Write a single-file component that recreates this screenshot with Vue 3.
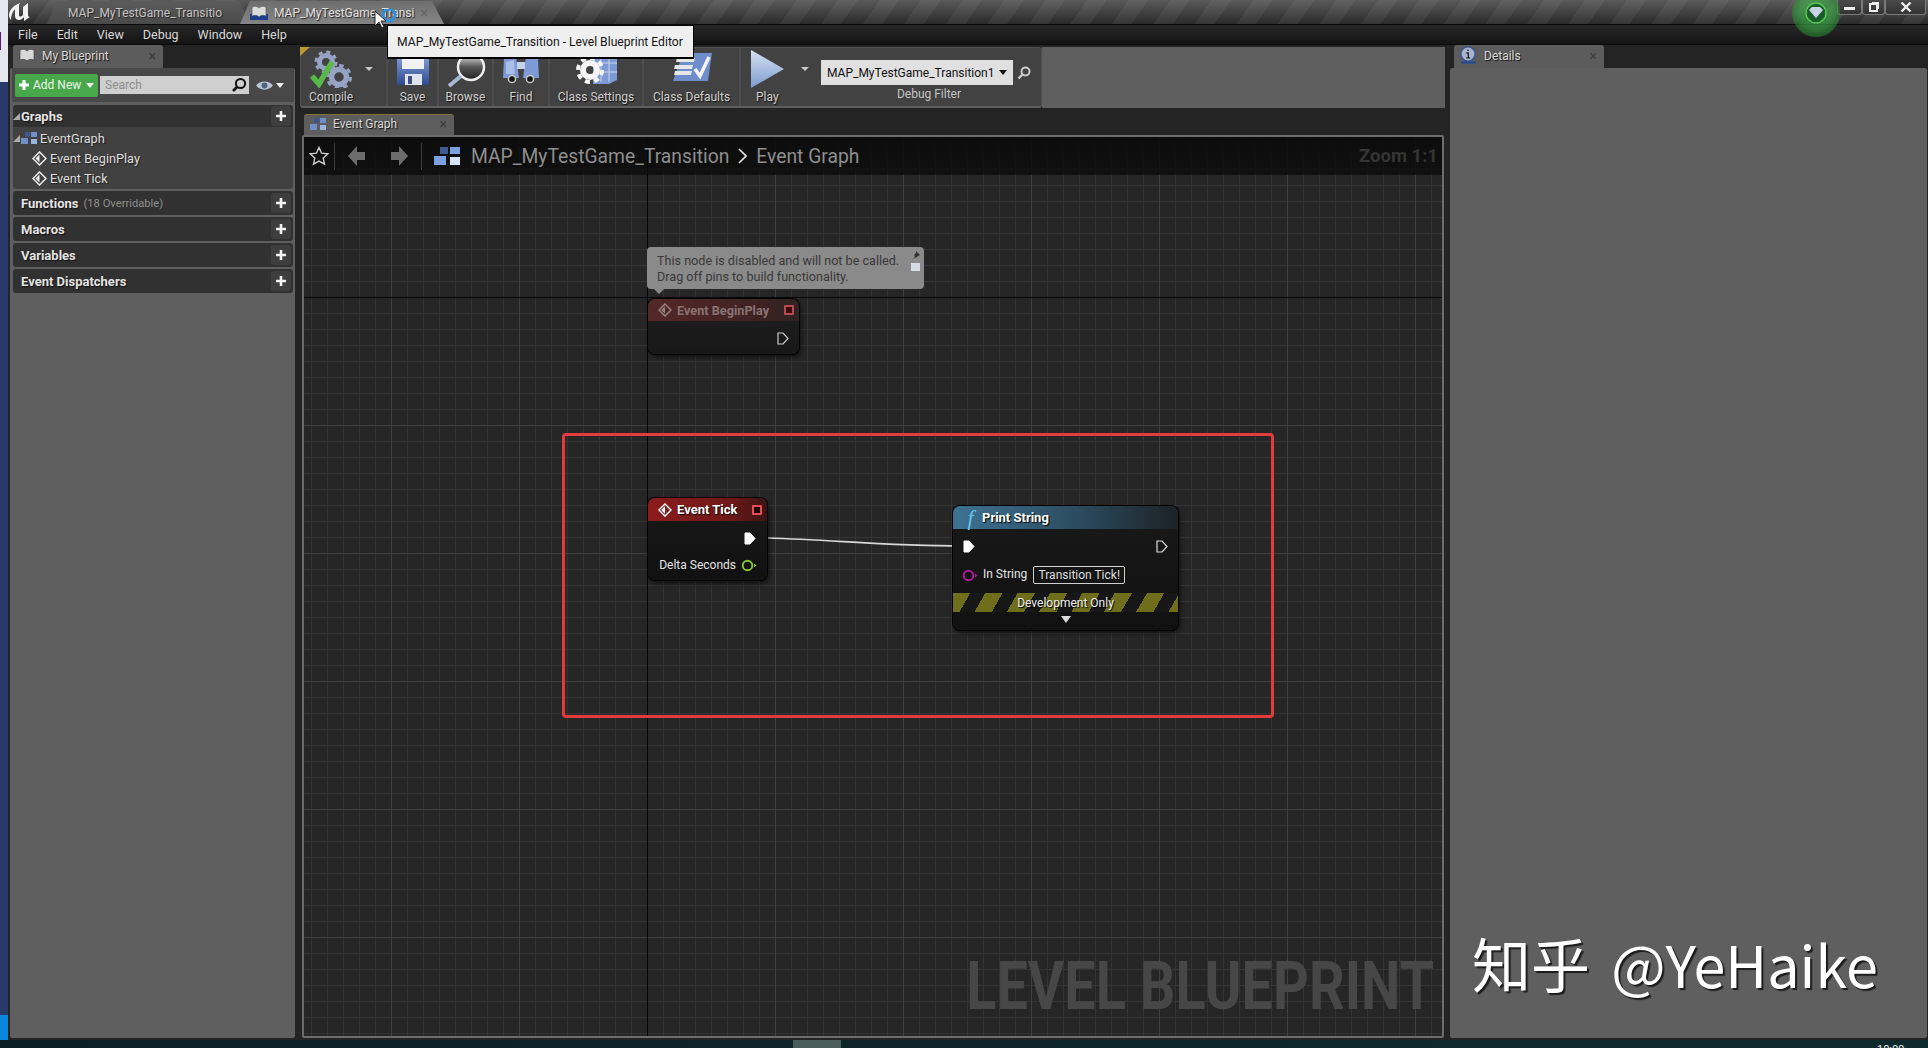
<script setup>
const menus = ['File', 'Edit', 'View', 'Debug', 'Window', 'Help']
const sections = [
  { name: 'Functions', note: '(18 Overridable)' },
  { name: 'Macros' },
  { name: 'Variables' },
  { name: 'Event Dispatchers' },
]
</script>

<template>
  <div class="root">
    <div class="main">
      <div class="strip">
        <div class="strip-light"><i class="strip-mark"></i></div>
        <div class="strip-navy"></div>
        <div class="strip-blue"></div>
      </div>

      <div class="window">
        <div class="titlebar">
          <svg class="logo" viewBox="0 0 24 20" width="24" height="20">
            <path d="M12 1C6 3 1 8 1 13c0 2 1 4 2 5 0-4 1-8 4-11v7c0 4 4 5 7 3l2-2v4l6-4c-2 0-2-1-2-3V1l-5 4v8c-2 2-4 2-4 0V3z" fill="#f2f2f2" />
          </svg>
          <div class="doc-tab doc-tab-off"><span class="doc-name">MAP_MyTestGame_Transitio</span></div>
          <div class="doc-tab doc-tab-on">
            <svg width="18" height="15" viewBox="0 0 18 15"><rect x="0" y="9" width="18" height="6" fill="#1d3f8c" /><path d="M2 2c3-1 5-1 7 1 2-2 4-2 7-1v9c-3-1-5-1-7 1-2-2-4-2-7-1z" fill="#dcdcdc" stroke="#555" stroke-width=".6" /></svg>
            <span class="doc-name">MAP_MyTestGame_Transi</span>
            <span class="x">×</span>
          </div>
          <div class="winbtns">
            <div class="winbtn wb-min"><i></i></div>
            <div class="winbtn wb-max"><i></i></div>
            <div class="winbtn wb-close">
              <svg width="12" height="12" viewBox="0 0 12 12"><path d="M1.5 1.5l9 9M10.5 1.5l-9 9" stroke="#eee" stroke-width="2.4" /></svg>
            </div>
          </div>
        </div>

        <div class="menubar">
          <span v-for="m in menus" :key="m" class="menu">{{ m }}</span>
        </div>

        <div class="body">
          <div class="col-left">
            <div class="panel-tab">
              <svg width="16" height="13" viewBox="0 0 16 13"><path d="M1 1c3-1 5-1 7 1 2-2 4-2 7-1v10c-3-1-5-1-7 1-2-2-4-2-7-1z" fill="#d8d8d8" stroke="#444" stroke-width=".7" /></svg>
              <span class="tab-text">My Blueprint</span>
              <span class="x">×</span>
            </div>
            <div class="panel panel-left">
              <div class="bpbar">
                <div class="addnew">
                  <svg width="12" height="12" viewBox="0 0 12 12"><path d="M6 1v10M1 6h10" stroke="#fff" stroke-width="3" /></svg>
                  <span>Add New</span>
                  <i class="tri tri-white"></i>
                </div>
                <div class="search">
                  <span>Search</span>
                  <svg width="16" height="16" viewBox="0 0 16 16"><circle cx="9.5" cy="6.5" r="4.6" fill="none" stroke="#111" stroke-width="2" /><path d="M6 10l-4 4" stroke="#111" stroke-width="2.6" /></svg>
                </div>
                <svg class="eye" width="19" height="11" viewBox="0 0 19 11"><path d="M1 5.5C5 0 14 0 18 5.5 14 11 5 11 1 5.5z" fill="#b9c4d8" /><circle cx="9.5" cy="5.5" r="3" fill="#52627f" /></svg>
                <i class="tri tri-white"></i>
              </div>

              <div class="sec-head sec-graphs">
                <i class="expander"></i>
                <b>Graphs</b>
                <span class="plus"><svg width="12" height="12" viewBox="0 0 12 12"><path d="M6 1v10M1 6h10" stroke="#f2f2f2" stroke-width="2.6" /></svg></span>
              </div>
              <div class="tree">
                <div class="tree-row">
                  <i class="expander"></i>
                  <svg width="16" height="12" viewBox="0 0 16 12"><rect x="0" y="6" width="7" height="6" fill="#6f8fc8" /><rect x="4" y="0" width="5" height="5" fill="#3e5788" /><rect x="10" y="0" width="6" height="5" fill="#6f8fc8" /><rect x="10" y="7" width="6" height="5" fill="#9ab4e0" /></svg>
                  <span>EventGraph</span>
                </div>
                <div class="tree-row tree-child">
                  <svg width="15" height="15" viewBox="0 0 15 15"><path d="M7.5 1l6.5 6.5L7.5 14 1 7.5z" fill="none" stroke="#eee" stroke-width="1.5" /><path d="M7.5 3.5v8L3.5 7.5z" fill="#eee" /></svg>
                  <span>Event BeginPlay</span>
                </div>
                <div class="tree-row tree-child">
                  <svg width="15" height="15" viewBox="0 0 15 15"><path d="M7.5 1l6.5 6.5L7.5 14 1 7.5z" fill="none" stroke="#eee" stroke-width="1.5" /><path d="M7.5 3.5v8L3.5 7.5z" fill="#eee" /></svg>
                  <span>Event Tick</span>
                </div>
              </div>
              <div v-for="s in sections" :key="s.name" class="sec-head sec-solo">
                <b>{{ s.name }}</b>
                <small v-if="s.note">{{ s.note }}</small>
                <span class="plus"><svg width="12" height="12" viewBox="0 0 12 12"><path d="M6 1v10M1 6h10" stroke="#f2f2f2" stroke-width="2.6" /></svg></span>
              </div>
            </div>
          </div>

          <div class="col-mid">
            <div class="topbar">
              <div class="tools">
                <i class="corner"></i>
                <div class="tool t-compile">
                  <svg width="76" height="38" viewBox="0 0 76 38">
                    <g fill="none" stroke="#97a3c4">
                      <circle cx="25" cy="12" r="6.5" stroke-width="5" />
                      <circle cx="25" cy="12" r="10" stroke-width="3" stroke-dasharray="4 3.85" />
                      <circle cx="38" cy="27" r="7.5" stroke-width="5.5" />
                      <circle cx="38" cy="27" r="11.5" stroke-width="3" stroke-dasharray="4.5 4.5" />
                    </g>
                    <path d="M11 26l7 8 13-22" fill="none" stroke="#58b848" stroke-width="5.5" />
                    <path d="M64 17h8l-4 4z" fill="#c8c8c8" />
                  </svg>
                  <span>Compile</span>
                </div>
                <div class="tool t-save">
                  <svg width="36" height="38" viewBox="0 0 36 38">
                    <defs><linearGradient id="fl" x1="0" y1="0" x2="0" y2="1"><stop offset="0" stop-color="#8aa5e0" /><stop offset="1" stop-color="#2e4a8f" /></linearGradient></defs>
                    <rect x="2" y="4" width="32" height="31" rx="2" fill="url(#fl)" />
                    <rect x="7" y="4" width="22" height="15" fill="#f2f2f2" />
                    <rect x="10" y="24" width="17" height="11" fill="#dfe4ee" />
                    <rect x="13" y="26" width="4" height="8" fill="#3b4e7e" />
                  </svg>
                  <span>Save</span>
                </div>
                <div class="tool t-browse">
                  <svg width="44" height="38" viewBox="0 0 44 38">
                    <defs><linearGradient id="gl" x1="0" y1="0" x2="0" y2="1"><stop offset="0" stop-color="#e8e8e8" /><stop offset=".5" stop-color="#555" /><stop offset="1" stop-color="#222" /></linearGradient></defs>
                    <circle cx="27" cy="17" r="13" fill="url(#gl)" stroke="#f0f0f0" stroke-width="2.5" />
                    <path d="M17 26L5 36" stroke="#aab8d8" stroke-width="4" />
                  </svg>
                  <span>Browse</span>
                </div>
                <div class="tool t-find">
                  <svg width="42" height="38" viewBox="0 0 42 38">
                    <path d="M4 8l12-2 3 22H3zM26 6l12 2 1 20H23z" fill="#7e9ad6" />
                    <path d="M6 12l8-2 1 14H6z" fill="#a9bfe8" />
                    <rect x="17" y="12" width="8" height="7" fill="#c6d2ea" />
                    <circle cx="12" cy="29" r="3.6" fill="#161616" stroke="#c9c9c9" stroke-width="1.5" />
                    <circle cx="30" cy="29" r="3.6" fill="#161616" stroke="#c9c9c9" stroke-width="1.5" />
                  </svg>
                  <span>Find</span>
                </div>
                <div class="tool t-settings">
                  <svg width="46" height="38" viewBox="0 0 46 38">
                    <path d="M20 4h24v26l-8 4H20z" fill="#7e9ad6" />
                    <path d="M28 4v28M36 4v28M20 13h24M20 22h24" stroke="#c6d2ea" stroke-width="1" />
                    <circle cx="17" cy="20" r="7" fill="none" stroke="#f6f6f6" stroke-width="6" />
                    <circle cx="17" cy="20" r="12" fill="none" stroke="#f6f6f6" stroke-width="4" stroke-dasharray="5 4.4" />
                  </svg>
                  <span>Class Settings</span>
                </div>
                <div class="tool t-defaults">
                  <svg width="42" height="38" viewBox="0 0 42 38">
                    <path d="M12 3h29l-4 28H2z" fill="#6f8ccb" />
                    <path d="M4 15h18l-1 4H3zM4 21h17l-1 4H3zM6 8h18l-1 4H5z" fill="#e6e6e6" />
                    <path d="M24 19l5 7 9-19" fill="none" stroke="#f4f4f4" stroke-width="3.5" />
                  </svg>
                  <span>Class Defaults</span>
                </div>
                <div class="tool t-play">
                  <svg width="76" height="38" viewBox="0 0 76 38">
                    <defs><linearGradient id="pl" x1="0" y1="0" x2="0" y2="1"><stop offset="0" stop-color="#d6e2f2" /><stop offset="1" stop-color="#7d9bcf" /></linearGradient></defs>
                    <path d="M10 0l33 19L10 38z" fill="url(#pl)" />
                    <path d="M60 17h8l-4 4z" fill="#c8c8c8" />
                  </svg>
                  <span>Play</span>
                </div>
                <div class="filter">
                  <div class="filter-row">
                    <div class="combo"><span>MAP_MyTestGame_Transition1</span><i class="tri tri-black"></i></div>
                    <svg width="14" height="14" viewBox="0 0 14 14"><circle cx="8.5" cy="5.5" r="4" fill="none" stroke="#ccc" stroke-width="2" /><path d="M5.5 8.5L1.5 12.5" stroke="#ccc" stroke-width="2.4" /></svg>
                  </div>
                  <span class="filter-label">Debug Filter</span>
                </div>
              </div>
              <div class="tools-rest"></div>
            </div>

            <div class="graph-tabs">
              <div class="graph-tab">
                <svg width="16" height="12" viewBox="0 0 16 12"><rect x="0" y="6" width="7" height="6" fill="#6f8fc8" /><rect x="4" y="0" width="5" height="5" fill="#3e5788" /><rect x="10" y="0" width="6" height="5" fill="#6f8fc8" /><rect x="10" y="7" width="6" height="5" fill="#9ab4e0" /></svg>
                <span class="tab-text">Event Graph</span>
                <span class="x">×</span>
              </div>
            </div>

            <div class="graph">
              <i class="axis axis-v"></i>
              <i class="axis axis-h"></i>

              <div class="graph-head">
                <div class="gh-cell gh-star">
                  <svg width="20" height="20" viewBox="0 0 20 20"><path d="M10 1.5l2.6 5.7 6.2.7-4.6 4.2 1.3 6.1L10 15.1l-5.5 3.1 1.3-6.1L1.2 7.9l6.2-.7z" fill="none" stroke="#cfcfcf" stroke-width="1.4" /></svg>
                </div>
                <i class="gh-div"></i>
                <div class="gh-cell gh-nav">
                  <svg width="18" height="20" viewBox="0 0 18 20"><path d="M9 0L0 10l9 10v-6h8V6H9z" fill="#6d6d6d" /></svg>
                  <svg width="18" height="20" viewBox="0 0 18 20"><path d="M9 0l9 10-9 10v-6H1V6h8z" fill="#6d6d6d" /></svg>
                </div>
                <i class="gh-div"></i>
                <svg class="gh-icon" width="26" height="18" viewBox="0 0 26 18"><rect x="0" y="9" width="12" height="9" fill="#7aa0e0" /><rect x="6" y="0" width="8" height="7" fill="#3e5a94" /><rect x="16" y="0" width="10" height="7" fill="#7aa0e0" /><rect x="16" y="10" width="10" height="8" fill="#d5e2f8" /></svg>
                <span class="crumb">MAP_MyTestGame_Transition</span>
                <svg class="crumb-sep" width="9" height="16" viewBox="0 0 9 16"><path d="M1 1l7 7-7 7" fill="none" stroke="#e6e6e6" stroke-width="1.6" /></svg>
                <span class="crumb">Event Graph</span>
                <span class="zoomlabel">Zoom 1:1</span>
              </div>

              <svg class="wire" width="200" height="20" viewBox="0 0 200 20">
                <path d="M2 4C70 6 120 12 198 12" fill="none" stroke="#d8d8d8" stroke-width="1.6" />
              </svg>

              <div class="comment">
                <p>This node is disabled and will not be called.</p>
                <p>Drag off pins to build functionality.</p>
                <div class="comment-tools">
                  <svg width="9" height="9" viewBox="0 0 9 9"><path d="M5 0l4 4-2 1-2 2-1-1-3 3 3-4-1-1 2-2z" fill="#333" /></svg>
                  <i></i>
                </div>
              </div>

              <div class="node node-off n-begin">
                <div class="node-head head-off">
                  <svg width="14" height="14" viewBox="0 0 15 15"><path d="M7.5 1l6.5 6.5L7.5 14 1 7.5z" fill="none" stroke="#9a8282" stroke-width="1.5" /><path d="M7.5 3.5v8L3.5 7.5z" fill="#9a8282" /></svg>
                  <b>Event BeginPlay</b>
                  <i class="sq"></i>
                </div>
                <div class="node-row row-end begin-row">
                  <svg width="12" height="13" viewBox="0 0 12 13"><path d="M1 1h5l5 5.5L6 12H1z" fill="none" stroke="#ccc" stroke-width="1.2" /></svg>
                </div>
              </div>

              <div class="node n-tick">
                <div class="node-head head-red">
                  <svg width="14" height="14" viewBox="0 0 15 15"><path d="M7.5 1l6.5 6.5L7.5 14 1 7.5z" fill="none" stroke="#fff" stroke-width="1.5" /><path d="M7.5 3.5v8L3.5 7.5z" fill="#fff" /></svg>
                  <b>Event Tick</b>
                  <i class="sq sq-on"></i>
                </div>
                <div class="node-row row-end tick-exec">
                  <svg width="12" height="13" viewBox="0 0 12 13"><path d="M1 1h5l5 5.5L6 12H1z" fill="#fff" stroke="#fff" /></svg>
                </div>
                <div class="node-row row-end tick-delta">
                  <span>Delta Seconds</span>
                  <svg width="16" height="13" viewBox="0 0 16 13"><circle cx="6.5" cy="6.5" r="4.8" fill="#111" stroke="#86c63c" stroke-width="1.9" /><path d="M13 4.5l2.5 2-2.5 2z" fill="#86c63c" /></svg>
                </div>
              </div>

              <div class="node n-print">
                <div class="node-head head-blue">
                  <i class="fn">f</i>
                  <b>Print String</b>
                </div>
                <div class="node-row print-exec">
                  <svg width="12" height="13" viewBox="0 0 12 13"><path d="M1 1h5l5 5.5L6 12H1z" fill="#fff" stroke="#fff" /></svg>
                  <svg width="12" height="13" viewBox="0 0 12 13"><path d="M1 1h5l5 5.5L6 12H1z" fill="none" stroke="#ddd" stroke-width="1.2" /></svg>
                </div>
                <div class="node-row print-str">
                  <svg width="16" height="13" viewBox="0 0 16 13"><circle cx="6.5" cy="6.5" r="4.8" fill="#111" stroke="#b5189e" stroke-width="1.9" /><path d="M13 4.5l2.5 2-2.5 2z" fill="#b5189e" /></svg>
                  <span class="str-label">In String</span>
                  <span class="str-input">Transition Tick!</span>
                </div>
                <div class="devonly">Development Only</div>
                <div class="node-arrow"><i></i></div>
              </div>

              <div class="redbox"></div>
              <div class="lvl">LEVEL BLUEPRINT</div>
            </div>
          </div>

          <div class="col-right">
            <div class="panel-tab details-tab">
              <svg width="20" height="19" viewBox="0 0 20 19"><circle cx="9" cy="8" r="7.2" fill="#a8b4d0" stroke="#3c5488" stroke-width="1.6" /><path d="M9 3.5v1.5M7.4 7H9.3v4.6M7.2 11.8h4" stroke="#222" stroke-width="1.3" fill="none" /><path d="M2 16.5h15" stroke="#2a4a8a" stroke-width="2.4" /></svg>
              <span class="tab-text">Details</span>
              <span class="x">×</span>
            </div>
            <div class="panel details-panel">
              <div class="brand">知乎 <span class="brand-latin">@YeHaike</span></div>
            </div>
          </div>
        </div>
      </div>
    </div>

    <div class="taskbar">
      <i class="task-app"></i>
      <span class="clock">10:09</span>
    </div>

    <div class="orb">
      <svg width="24" height="24" viewBox="0 0 24 24">
        <circle cx="12" cy="12" r="10" fill="#1b5c28" stroke="#57c957" stroke-width="1.4" />
        <path d="M5 9l3-3h8l3 3-7 8z" fill="#c6d4e6" />
      </svg>
    </div>

    <div class="tooltip">MAP_MyTestGame_Transition - Level Blueprint Editor</div>

    <svg class="cursor" width="24" height="24" viewBox="0 0 24 24">
      <circle cx="15" cy="6" r="6" fill="none" stroke="#2f8fe0" stroke-width="3" />
      <path d="M1 2v15l4-4 3 6 2-1-3-6h5z" fill="#fff" stroke="#000" stroke-width=".8" />
    </svg>
  </div>
</template>

<style>
html, body { margin: 0; background: #242424; }
</style>

<style scoped>
* { box-sizing: border-box; }
p { margin: 0; }
i { font-style: normal; display: block; }

.root {
  position: relative;
  width: 1928px;
  height: 1048px;
  overflow: hidden;
  display: flex;
  flex-direction: column;
  font-family: Roboto, "Noto Sans", sans-serif;
  font-size: 12px;
  color: #dcdcdc;
  background: #242424;
}
.main { display: flex; height: 1040px; }

.strip { width: 8px; display: flex; flex-direction: column; }
.strip-light { height: 82px; background: #e6e7ef; position: relative; }
.strip-mark { position: absolute; left: 0; top: 32px; width: 1px; height: 18px; background: #5a1a7a; }
.strip-navy { flex: 1; background: #28396a; }
.strip-blue { height: 25px; background: #0a86dc; }

.window { flex: 1; min-width: 0; display: flex; flex-direction: column; }

.titlebar {
  height: 25px;
  display: flex;
  align-items: flex-end;
  background:
    repeating-linear-gradient(125deg, rgba(255,255,255,.05) 0 16px, rgba(255,255,255,0) 16px 34px),
    linear-gradient(#5a5a5a, #2a2a2a);
  border-bottom: 1px solid #0a0a0a;
  position: relative;
}
.logo { margin: 0 0 1px 0; flex: none; align-self: center; }
.doc-tab {
  height: 23px;
  width: 204px;
  display: flex;
  align-items: center;
  gap: 6px;
  flex: none;
}
.doc-tab-off {
  margin-left: 15px;
  padding-left: 21px;
  background: linear-gradient(#5c5c5c, #4a4a4a);
  clip-path: polygon(10px 0, 192px 0, 204px 100%, 0 100%);
}
.doc-tab-on {
  margin-left: -11px;
  padding-left: 10px;
  background: linear-gradient(#6e6e6e, #858585);
  clip-path: polygon(10px 0, 192px 0, 204px 100%, 0 100%);
}
.doc-name { font-size: 12px; color: #c4c4c4; text-shadow: 1px 1px 1px #222; white-space: nowrap; }
.doc-tab-on .doc-name { color: #e0e0e0; }
.x { color: #3c3c3c; font-size: 14px; line-height: 1; margin-left: auto; }
.doc-tab-on .x { margin-left: 0; color: #666; }

.winbtns { display: flex; margin-left: auto; align-self: flex-start; margin-right: 2px; }
.winbtn {
  height: 15px;
  display: flex;
  align-items: center;
  justify-content: center;
  border: 1px solid #7a7a7a;
  border-top: none;
  border-radius: 0 0 3px 3px;
  background: linear-gradient(#4a4a4a, #333);
}
.wb-min { width: 25px; }
.wb-min i { width: 11px; height: 3px; background: #eee; margin-top: 3px; }
.wb-max { width: 23px; }
.wb-max i { width: 9px; height: 9px; border: 2px solid #eee; box-shadow: 2px -2px 0 -1px #eee; }
.wb-close { width: 41px; }

.menubar {
  height: 20px;
  display: flex;
  align-items: center;
  padding-left: 10px;
  gap: 19px;
  background: linear-gradient(#272727, #141414);
  border-bottom: 1px solid #0a0a0a;
}
.menu { color: #d8d8d8; font-size: 12.5px; }

.body { flex: 1; min-height: 0; display: flex; padding: 0 1px 2px 2px; }

.col-left { width: 285px; flex: none; display: flex; flex-direction: column; }
.panel-tab {
  width: 150px;
  height: 23px;
  margin: 0 0 0 3px;
  padding: 0 7px 2px 6px;
  display: flex;
  align-items: center;
  background: #5c5c5c;
  border-radius: 3px 3px 0 0;
  flex: none;
}
.tab-text { margin-left: 7px; color: #d8d8d8; text-shadow: 1px 1px 1px #111; font-size: 12px; }
.panel { flex: 1; min-height: 0; background: #5f5f5f; border-radius: 2px; padding: 0 2px; }
.panel-left { padding-right: 1px; }

.bpbar {
  height: 34px;
  margin: 0 0 3px;
  padding: 0 4px 0 3px;
  display: flex;
  align-items: center;
  background: #484848;
}
.addnew {
  width: 83px;
  height: 23px;
  display: flex;
  align-items: center;
  gap: 3px;
  padding-left: 3px;
  background: #4aa84c;
  border-radius: 2px;
  color: #e8f5e8;
  font-size: 12px;
}
.search {
  width: 149px;
  height: 18px;
  margin-left: 2px;
  padding: 0 2px 0 5px;
  display: flex;
  align-items: center;
  justify-content: space-between;
  background: #cfcfcf;
  color: #8d8d8d;
  font-size: 12px;
}
.eye { margin-left: 6px; }
.tri { width: 0; height: 0; border-left: 4px solid transparent; border-right: 4px solid transparent; margin-left: 2px; }
.tri-white { border-top: 5px solid #eee; }
.tri-black { border-top: 5px solid #111; }

.sec-head {
  height: 22px;
  margin: 0 1px;
  display: flex;
  align-items: center;
  background: #313131;
  border-radius: 3px 3px 0 0;
  color: #e4e4e4;
  font-size: 13px;
  text-shadow: 1px 1px 1px #111;
}
.sec-head b { font-weight: 700; }
.sec-head small { font-size: 11.2px; color: #8f8f8f; margin-left: 5px; text-shadow: none; }
.expander {
  width: 0; height: 0;
  border-left: 7px solid transparent;
  border-bottom: 7px solid #aaa;
  margin-right: 1px;
}
.plus {
  margin-left: auto;
  margin-right: 2px;
  width: 20px;
  height: 20px;
  background: #3e3e3e;
  border-radius: 3px;
  display: flex;
  align-items: center;
  justify-content: center;
}
.tree { margin: 0 1px 2px; height: 62px; background: #414141; border-radius: 0 0 3px 3px; padding: 1px 0; }
.tree-row { height: 20px; display: flex; align-items: center; color: #dedede; font-size: 12.7px; text-shadow: 1px 1px 1px #222; }
.tree-row span { margin-left: 3px; }
.tree-child { padding-left: 19px; }
.sec-solo { height: 24px; margin-bottom: 2px; border-radius: 3px; padding-left: 8px; }

.col-mid { width: 1145px; flex: none; margin-left: 5px; display: flex; flex-direction: column; }
.topbar { display: flex; height: 61px; margin-top: 2px; flex: none; }
.tools {
  position: relative;
  width: 742px;
  display: flex;
  background: #424242;
  border: 1px solid #505050;
  border-bottom: 2px solid #5e5e5e;
  border-radius: 3px;
}
.tools-rest { flex: 1; background: #5f5f5f; }
.corner {
  position: absolute; left: -1px; top: -1px;
  width: 0; height: 0;
  border-top: 9px solid #bb9a33;
  border-right: 10px solid transparent;
}
.tool {
  display: flex;
  flex-direction: column;
  align-items: center;
  justify-content: flex-start;
  padding-top: 2px;
  border-right: 2px solid #4e4e4e;
  flex: none;
  font-size: 12px;
  color: #d0d0d0;
  text-shadow: 1px 1px 1px #111;
  white-space: nowrap;
}
.tool span { margin-top: 2px; line-height: 14px; }
.t-compile { width: 87px; align-items: flex-start; }
.t-compile span { margin-left: 8px; }
.t-save { width: 51px; }
.t-browse { width: 55px; }
.t-find { width: 56px; }
.t-settings { width: 94px; }
.t-defaults { width: 97px; }
.t-play { width: 80px; border-right: none; align-items: flex-start; }
.t-play span { margin-left: 15px; }
.filter { flex: 1; display: flex; flex-direction: column; padding-top: 12px; }
.filter-row { display: flex; align-items: center; gap: 4px; }
.combo {
  width: 192px;
  height: 25px;
  display: flex;
  align-items: center;
  justify-content: space-between;
  padding: 0 6px;
  background: #e0e0e0;
  color: #111;
  font-size: 12px;
  white-space: nowrap;
}
.filter-label { width: 216px; text-align: center; font-size: 12px; color: #c4c4c4; margin-top: 2px; }

.graph-tabs { height: 27px; padding: 6px 0 0 4px; flex: none; }
.graph-tab {
  width: 150px;
  height: 21px;
  display: flex;
  align-items: center;
  padding: 0 7px 2px 6px;
  background: linear-gradient(#5c5c5c, #5e5e5e);
  border-top: 1px solid #7f7338;
  border-radius: 3px 3px 0 0;
}

.graph {
  position: relative;
  flex: 1;
  min-height: 0;
  margin-left: 2px;
  width: 1142px;
  border: 2px solid #6c6c6c;
  border-radius: 2px;
  background-color: #262626;
  background-image:
    linear-gradient(to right, #404040 1px, transparent 1px),
    linear-gradient(to bottom, #404040 1px, transparent 1px),
    linear-gradient(to right, #343434 1px, transparent 1px),
    linear-gradient(to bottom, #343434 1px, transparent 1px);
  background-size: 128px 128px, 128px 128px, 16px 16px, 16px 16px;
  background-position: 343px 0, 0 160px, 343px 0, 0 160px;
  overflow: hidden;
}
.axis { position: absolute; background: #050505; }
.axis-v { left: 343px; top: 0; bottom: 0; width: 1px; }
.axis-h { top: 160px; left: 0; right: 0; height: 1px; }

.graph-head {
  position: relative;
  height: 38px;
  display: flex;
  align-items: center;
  background: linear-gradient(rgba(10,10,10,.92), rgba(10,10,10,.78));
}
.gh-cell { display: flex; align-items: center; justify-content: center; flex: none; }
.gh-star { width: 30px; }
.gh-nav { width: 86px; gap: 24px; }
.gh-div { width: 1px; height: 27px; background: #3c3c3c; flex: none; }
.gh-icon { margin: 0 11px 0 12px; flex: none; }
.crumb { color: #8e8e8e; font-size: 19.3px; white-space: nowrap; }
.crumb-sep { margin: 0 9px; flex: none; }
.zoomlabel { margin-left: auto; margin-right: 4px; color: #353535; font-weight: 700; font-size: 18.5px; }

.wire { position: absolute; left: 462px; top: 397px; }

.comment {
  position: absolute;
  left: 343px;
  top: 110px;
  width: 277px;
  height: 42px;
  padding: 6px 10px;
  background: #8a8a8a;
  border-radius: 4px;
  color: #383838;
  font-size: 12.6px;
  line-height: 16px;
  white-space: nowrap;
}
.comment::after {
  content: "";
  position: absolute;
  left: 7px;
  bottom: -5px;
  border-left: 5px solid transparent;
  border-right: 5px solid transparent;
  border-top: 5px solid #8a8a8a;
}
.comment-tools { position: absolute; right: 4px; top: 4px; display: flex; flex-direction: column; gap: 3px; align-items: center; }
.comment-tools i { width: 9px; height: 8px; background: #d6dce4; }

.node {
  position: absolute;
  background: linear-gradient(#191919, #111);
  border-radius: 7px;
  box-shadow: 0 0 0 1px #000, 2px 3px 5px rgba(0,0,0,.6);
}
.node-head {
  display: flex;
  align-items: center;
  gap: 5px;
  padding-left: 10px;
  border-radius: 7px 7px 0 0;
  font-size: 13px;
  color: #fff;
}
.node-head b { font-weight: 700; text-shadow: 1px 1px 1px #000; }
.head-off { height: 22px; background: linear-gradient(90deg, #552828, #3f2222 70%, #2e2222); color: #8a7272; font-size: 12.7px; }
.head-off b { text-shadow: none; }
.head-red { height: 23px; background: linear-gradient(90deg, #8c1c1c, #6e1818 70%, #3a1414); }
.head-blue { height: 23px; background: linear-gradient(90deg, #3e7294, #2c4c60 55%, #1c2226); padding-left: 11px; }
.fn { font-family: "Liberation Serif", serif; font-style: italic; color: #68c2ee; font-size: 22px; line-height: 1; width: 13px; text-align: center; }
.sq {
  margin-left: auto;
  margin-right: 5px;
  width: 10px;
  height: 10px;
  background: #3a0d0d;
  border: 2px solid #b84a52;
  border-radius: 1px;
}
.sq-on { border-color: #ee4a54; background: #1a0808; }
.node-row { display: flex; align-items: center; color: #e4e4e4; font-size: 12px; white-space: nowrap; }
.row-end { justify-content: flex-end; }

.node-off { background: linear-gradient(#1f1f1f, #181818); }
.n-begin { left: 344px; top: 162px; width: 151px; height: 55px; }
.begin-row { height: 13px; margin-top: 11px; padding-right: 10px; }

.n-tick { left: 344px; top: 361px; width: 119px; height: 82px; }
.tick-exec { height: 18px; margin-top: 8px; padding-right: 11px; }
.tick-delta { height: 18px; margin-top: 9px; padding-right: 10px; gap: 5px; }

.n-print { left: 649px; top: 369px; width: 225px; height: 124px; }
.print-exec { height: 18px; margin-top: 8px; padding: 0 10px 0 10px; justify-content: space-between; }
.print-str { height: 18px; margin-top: 11px; padding-left: 9px; gap: 5px; }
.str-label { margin-top: -3px; }
.str-input {
  height: 18px;
  width: 92px;
  margin-left: 1px;
  border: 1px solid #d0d0d0;
  border-radius: 2px;
  display: flex;
  align-items: center;
  justify-content: center;
  color: #dedede;
}
.devonly {
  height: 19px;
  margin-top: 9px;
  display: flex;
  align-items: center;
  justify-content: center;
  color: #f0f0f0;
  font-size: 12px;
  text-shadow: 1px 1px 1px #000;
  background-image: repeating-linear-gradient(120deg, #6e6e1c 0 15px, #171717 15px 28px);
}
.node-arrow { height: 14px; display: flex; align-items: center; justify-content: center; }
.node-arrow i { width: 0; height: 0; border-left: 5px solid transparent; border-right: 5px solid transparent; border-top: 7px solid #ddd; }

.redbox {
  position: absolute;
  left: 258px;
  top: 296px;
  width: 712px;
  height: 285px;
  border: 3px solid #e33b3b;
  border-radius: 4px;
}
.lvl {
  position: absolute;
  right: 8px;
  bottom: 16px;
  font-size: 66px;
  line-height: 1;
  font-weight: 700;
  color: #474747;
  white-space: nowrap;
  transform: scaleX(.846);
  transform-origin: right center;
}

.col-right { flex: 1; min-width: 0; margin-left: 5px; display: flex; flex-direction: column; }
.details-tab { margin-left: 4px; padding-left: 5px; }
.details-tab .tab-text { margin-left: 5px; }
.details-panel { padding: 865px 0 0 22px; }
.brand {
  font-family: "Noto Sans CJK SC", "Noto Sans", sans-serif;
  font-size: 59px;
  line-height: 1;
  color: #fff;
  white-space: nowrap;
  text-shadow: 2px 2px 1px #1c1c1c;
}
.brand-latin { font-size: 57.5px; margin-left: 8px; }

.taskbar { height: 8px; display: flex; overflow: hidden; background: linear-gradient(90deg, #0b2026, #0f2a2c); flex: none; }
.task-app { width: 48px; margin-left: 793px; background: #4a5d5b; }
.clock { margin-left: 1036px; font-size: 11px; line-height: 12px; margin-top: 4px; color: #eee; white-space: nowrap; }

.orb {
  position: absolute;
  left: 1792px;
  top: -11px;
  width: 48px;
  height: 48px;
  border-radius: 50%;
  background: radial-gradient(circle, rgba(60,180,70,.6) 0 45%, rgba(40,140,50,.55) 70%, rgba(30,120,40,.3) 100%);
  display: flex;
  align-items: center;
  justify-content: center;
}

.tooltip {
  position: absolute;
  left: 387px;
  top: 25px;
  width: 307px;
  height: 34px;
  display: flex;
  align-items: center;
  padding-left: 9px;
  background: #efefef;
  border: 1px solid #000;
  border-width: 1px 1px 2px 1px;
  color: #141414;
  font-size: 12.15px;
  white-space: nowrap;
}
.cursor { position: absolute; left: 374px; top: 9px; }
</style>
